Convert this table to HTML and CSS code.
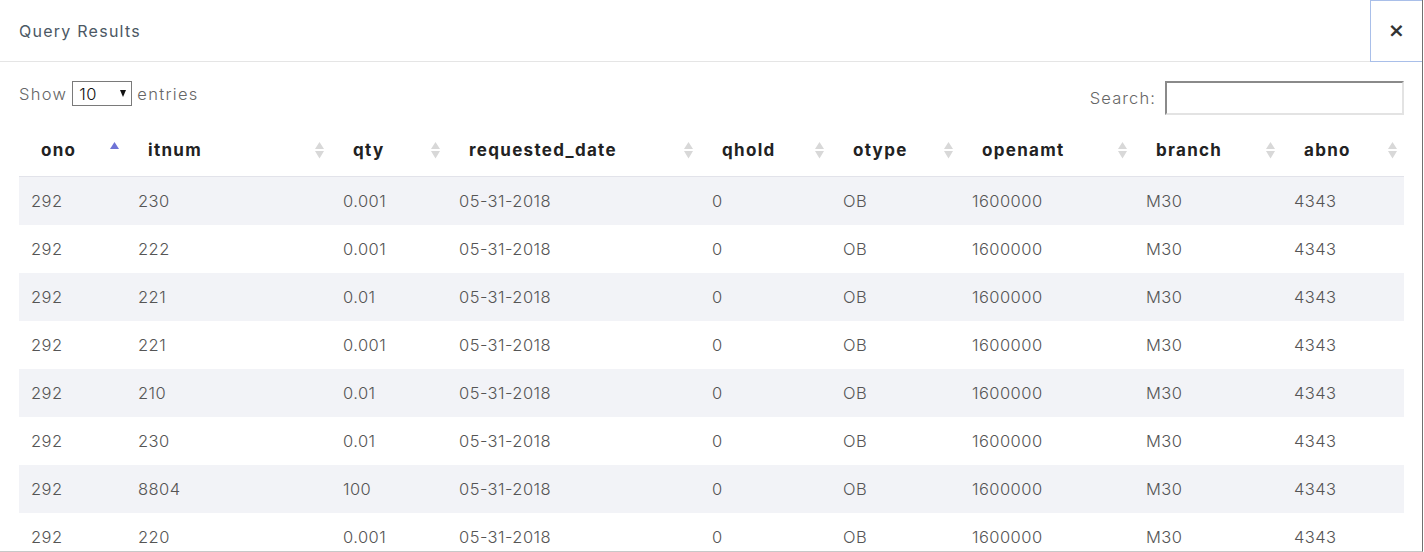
FILE: index.html
```html
<!DOCTYPE html>
<html>
<head>
<meta charset="utf-8">
<title>Query Results</title>
<link rel="stylesheet" href="styles.css">
</head>
<body>
<div class="modal">
  <div class="modal-header">
    <h4 class="modal-title">Query Results</h4>
    <button class="close" type="button">&times;</button>
  </div>
  <div class="modal-body">
    <div class="controls">
      <label class="length">Show
        <span class="select"><span class="select-val">10</span><span class="select-arrow"></span></span>
        entries</label>
      <label class="filter">Search:<input type="search" class="search"></label>
    </div>
    <table class="grid">
      <colgroup>
        <col class="c1"><col class="c2"><col class="c3"><col class="c4"><col class="c5"><col class="c6"><col class="c7"><col class="c8"><col class="c9">
      </colgroup>
      <thead>
        <tr>
          <th><div class="th-in"><span>ono</span><svg class="sort" width="9" height="17" viewBox="0 0 9 17"><path class="asc-on" d="M4.5 0 L9 7 L0 7 Z"/></svg></div></th>
          <th><div class="th-in"><span>itnum</span><svg class="sort" width="9" height="17" viewBox="0 0 9 17"><path d="M4.5 0 L9 7 L0 7 Z M0 9 L9 9 L4.5 16.5 Z"/></svg></div></th>
          <th><div class="th-in"><span>qty</span><svg class="sort" width="9" height="17" viewBox="0 0 9 17"><path d="M4.5 0 L9 7 L0 7 Z M0 9 L9 9 L4.5 16.5 Z"/></svg></div></th>
          <th><div class="th-in"><span>requested_date</span><svg class="sort" width="9" height="17" viewBox="0 0 9 17"><path d="M4.5 0 L9 7 L0 7 Z M0 9 L9 9 L4.5 16.5 Z"/></svg></div></th>
          <th><div class="th-in"><span>qhold</span><svg class="sort" width="9" height="17" viewBox="0 0 9 17"><path d="M4.5 0 L9 7 L0 7 Z M0 9 L9 9 L4.5 16.5 Z"/></svg></div></th>
          <th><div class="th-in"><span>otype</span><svg class="sort" width="9" height="17" viewBox="0 0 9 17"><path d="M4.5 0 L9 7 L0 7 Z M0 9 L9 9 L4.5 16.5 Z"/></svg></div></th>
          <th><div class="th-in"><span>openamt</span><svg class="sort" width="9" height="17" viewBox="0 0 9 17"><path d="M4.5 0 L9 7 L0 7 Z M0 9 L9 9 L4.5 16.5 Z"/></svg></div></th>
          <th><div class="th-in"><span>branch</span><svg class="sort" width="9" height="17" viewBox="0 0 9 17"><path d="M4.5 0 L9 7 L0 7 Z M0 9 L9 9 L4.5 16.5 Z"/></svg></div></th>
          <th><div class="th-in"><span>abno</span><svg class="sort" width="9" height="17" viewBox="0 0 9 17"><path d="M4.5 0 L9 7 L0 7 Z M0 9 L9 9 L4.5 16.5 Z"/></svg></div></th>
        </tr>
      </thead>
      <tbody>
        <tr><td>292</td><td>230</td><td>0.001</td><td>05-31-2018</td><td>0</td><td>OB</td><td>1600000</td><td>M30</td><td>4343</td></tr>
        <tr><td>292</td><td>222</td><td>0.001</td><td>05-31-2018</td><td>0</td><td>OB</td><td>1600000</td><td>M30</td><td>4343</td></tr>
        <tr><td>292</td><td>221</td><td>0.01</td><td>05-31-2018</td><td>0</td><td>OB</td><td>1600000</td><td>M30</td><td>4343</td></tr>
        <tr><td>292</td><td>221</td><td>0.001</td><td>05-31-2018</td><td>0</td><td>OB</td><td>1600000</td><td>M30</td><td>4343</td></tr>
        <tr><td>292</td><td>210</td><td>0.01</td><td>05-31-2018</td><td>0</td><td>OB</td><td>1600000</td><td>M30</td><td>4343</td></tr>
        <tr><td>292</td><td>230</td><td>0.01</td><td>05-31-2018</td><td>0</td><td>OB</td><td>1600000</td><td>M30</td><td>4343</td></tr>
        <tr><td>292</td><td>8804</td><td>100</td><td>05-31-2018</td><td>0</td><td>OB</td><td>1600000</td><td>M30</td><td>4343</td></tr>
        <tr><td>292</td><td>220</td><td>0.001</td><td>05-31-2018</td><td>0</td><td>OB</td><td>1600000</td><td>M30</td><td>4343</td></tr>
      </tbody>
    </table>
  </div>
</div>
</body>
</html>
```

FILE: styles.css
```css
html, body {
  margin: 0;
  padding: 0;
  background: #ffffff;
}

body {
  font-family: Inter, "Noto Sans", "DejaVu Sans", sans-serif;
  font-size: 16px;
  color: #555;
}

.modal {
  width: 1423px;
  height: 552px;
  box-sizing: border-box;
  border-right: 1px solid #707070;
  border-bottom: 1px solid #c8c8c8;
  overflow: hidden;
  background: #fff;
}

.modal-header {
  height: 62px;
  box-sizing: border-box;
  border-bottom: 1px solid #e5e5e5;
  display: flex;
  align-items: stretch;
  justify-content: space-between;
}

.modal-title {
  margin: 0;
  padding-left: 19px;
  align-self: center;
  font-size: 16px;
  font-weight: 400;
  color: #4c5864;
  letter-spacing: 1.25px;
}

.close {
  width: 52px;
  height: 62px;
  margin: 0;
  padding: 0 0 2px 0;
  background: #fff;
  border: 1px solid #a9bfe9;
  border-right: none;
  font-family: "DejaVu Sans", sans-serif;
  font-size: 20px;
  font-weight: 700;
  color: #333;
  line-height: 1;
}

.modal-body {
  padding: 19px 18px 0 19px;
}

.controls {
  display: flex;
  justify-content: space-between;
  align-items: flex-start;
  height: 47px;
}

.length {
  display: flex;
  align-items: center;
  height: 25px;
  font-size: 16.5px;
  font-weight: 300;
  color: #666;
  letter-spacing: 1.3px;
  gap: 5px;
}

.select {
  display: inline-flex;
  align-items: center;
  justify-content: space-between;
  width: 60px;
  height: 25px;
  box-sizing: border-box;
  border: 1px solid #7a7a7a;
  padding: 0 5px 0 6px;
  color: #111;
  font-weight: 300;
  letter-spacing: 0.4px;
}

.select-arrow {
  width: 0;
  height: 0;
  border-left: 3.5px solid transparent;
  border-right: 3.5px solid transparent;
  border-top: 7px solid #111;
}

.filter {
  display: flex;
  align-items: center;
  height: 34px;
  font-size: 16.5px;
  font-weight: 300;
  color: #666;
  letter-spacing: 1.1px;
}

.search {
  margin-left: 9px;
  width: 239px;
  height: 34px;
  box-sizing: border-box;
  border: 2px solid;
  border-color: #8a8a8a #e3e3e3 #e3e3e3 #8a8a8a;
  background: #fff;
  padding: 0 4px;
  outline: none;
}

.grid {
  width: 1385px;
  table-layout: fixed;
  border-collapse: collapse;
  border-spacing: 0;
}

.c1 { width: 107px; }
.c2 { width: 205px; }
.c3 { width: 116px; }
.c4 { width: 253px; }
.c5 { width: 131px; }
.c6 { width: 129px; }
.c7 { width: 174px; }
.c8 { width: 148px; }
.c9 { width: 122px; }

.grid th {
  padding: 10px 7px 14px 22px;
  text-align: left;
  font-size: 17px;
  font-weight: 700;
  color: #222;
  letter-spacing: 1.3px;
  line-height: 24px;
  border-bottom: 1px solid #e2e3ea;
}

.th-in {
  display: flex;
  align-items: center;
  justify-content: space-between;
}

.sort {
  display: block;
  fill: #d8d8d8;
  margin-top: 1px;
}

.sort .asc-on {
  fill: #6f73d6;
}

.grid td {
  padding: 12px 12px;
  line-height: 24px;
  font-size: 16.5px;
  font-weight: 300;
  color: #555;
  letter-spacing: 0.45px;
  white-space: nowrap;
}

.grid tbody tr:nth-child(odd) td {
  background: #f2f3f7;
}
```
